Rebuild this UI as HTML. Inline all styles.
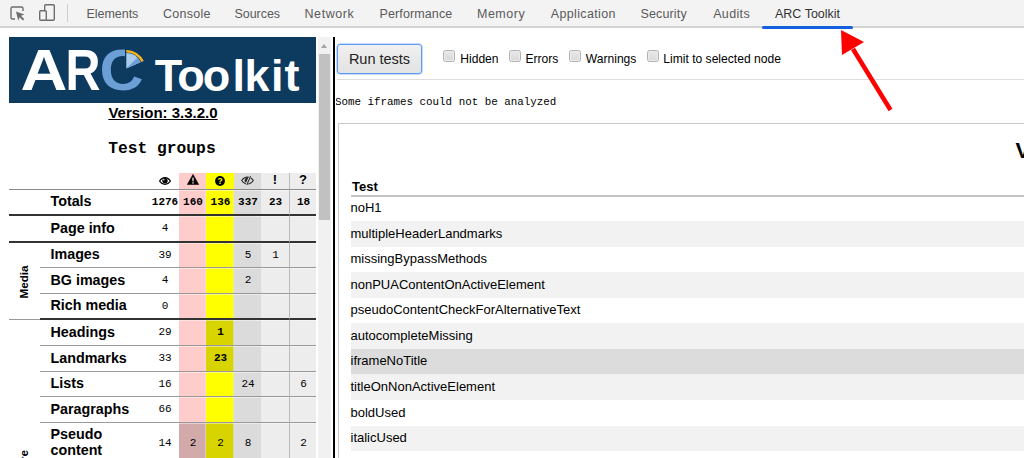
<!DOCTYPE html>
<html lang="en">
<head>
<meta charset="utf-8">
<title>ARC Toolkit</title>
<style>
*{box-sizing:border-box}
html,body{margin:0;padding:0}
body{width:1024px;height:458px;overflow:hidden;background:#fff;position:relative;font-family:"Liberation Sans",Arial,sans-serif;color:#000}
/* devtools tab bar */
#tabbar{position:absolute;left:0;top:0;width:1024px;height:28px;background:#f3f3f3;border-bottom:2px solid #d3d3d3}
#tabbar .ico{position:absolute;top:0;left:0}
#tabbar ul{list-style:none;margin:0;padding:0}
#tabbar li{position:absolute;top:7px;font-size:12.5px;line-height:15px;color:#5a5a5a;white-space:nowrap}
#tabbar li.sel{color:#333}
#tabbar .ul{position:absolute;left:762px;top:25.6px;width:91px;height:3px;border-radius:1.5px;background:#1560dd}
/* left panel */
#left{position:absolute;left:0;top:37px;width:318px;height:421px;overflow:hidden}
#logo{position:absolute;left:9px;top:0;width:307px;height:66px;background:#0d3a5f;margin:0}
#ver{position:absolute;left:9px;top:67px;width:308px;margin:0;text-align:center;font-weight:bold;font-size:15px;line-height:17px;text-decoration:underline}
#tg{position:absolute;left:8px;top:102px;width:308px;margin:0;text-align:center;font-family:"Liberation Mono",monospace;font-weight:bold;font-size:16.25px;line-height:20px}
#sb{position:absolute;left:318px;top:37px;width:13px;height:421px;background:#f1f1f1}
#sb .thumb{position:absolute;left:1px;top:17px;width:11px;height:166px;background:#c1c1c1}
#sb .up{position:absolute;left:3px;top:7px;width:0;height:0;border-left:3.5px solid transparent;border-right:3.5px solid transparent;border-bottom:4px solid #a3a3a3}
#divider{position:absolute;left:333px;top:37px;width:2px;height:421px;background:#000}
/* groups table */
#groups{position:absolute;left:9px;top:136px;width:307px;border-collapse:separate;border-spacing:0;table-layout:fixed}
#groups td,#groups th{padding:0;margin:0;font-weight:normal;text-align:center;vertical-align:middle;height:26px;border:0 solid #999;border-bottom-width:1px}
#groups thead th,#groups thead td{height:17px;line-height:0;border-bottom-color:#8a8a8a;padding-bottom:2px}
#groups .ic{display:inline-block;vertical-align:middle}
#groups th.sym{font-weight:bold;font-size:13px;line-height:14px}
#groups .n{font-family:"Liberation Mono",monospace;font-size:11px;padding:0 0 1px 1px}
#groups .n.hit{font-weight:bold}
#groups tr.r-ps .n.hit{font-weight:normal}
#groups tr.tot .n{font-weight:bold}
#groups th.lab{text-align:left;font-weight:bold;font-size:14.3px;padding:0 0 2px 10.5px;line-height:16px}
#groups th.lab.top{padding-left:41.5px}
#groups tr.r-tot>*,#groups tr.r-pi>*{border-bottom:2px solid #333}
#groups tr.g.last th.lab,#groups tr.g.last td{border-bottom:2px solid #333}
#groups th.grp{position:relative;overflow:visible}
#groups th.grp span{position:absolute;left:50%;top:50%;transform:translate(-50%,-50%) rotate(-90deg);font-weight:bold;font-size:11.7px;line-height:14px;white-space:nowrap;margin:1px 0 0 -0.5px}
#groups th.grp.st span{top:154.5px}
#groups tr.r-pi>*{height:27px}
#groups tr.r-im>th.lab,#groups tr.r-im>td{height:25px}
#groups tr.r-li>*{height:25px}
#groups tr.r-ps>*{height:41px}
#groups .c1{background:#ffcccc;box-shadow:inset 0 1px 0 rgba(255,255,255,.45),inset -1px 0 0 rgba(240,225,255,.5)}
#groups .c2{background:#ffff00;box-shadow:inset 0 1px 0 rgba(255,255,255,.45),inset -1px 0 0 rgba(225,225,255,.6)}
#groups .c3{background:#dbdbdb;box-shadow:inset 0 1px 0 rgba(255,255,255,.45)}
#groups .c4{background:#ededed;box-shadow:inset 0 1px 0 rgba(255,255,255,.45)}
#groups .c5{background:#ededed;border-left:1px solid #bbb;box-shadow:inset 0 1px 0 rgba(255,255,255,.45)}
#groups thead .c1,#groups thead .c2,#groups thead .c3,#groups thead .c4,#groups thead .c5{box-shadow:none}
#groups .c1.hit{background:#d2aaaa}
#groups .c2.hit{background:#d8d400}
/* right panel */
#right{position:absolute;left:336px;top:37px;width:688px;height:421px;overflow:hidden}
#run{position:absolute;left:1px;top:7px;width:85px;height:30px;border:1.5px solid #5e9af7;border-radius:3px;background:linear-gradient(#f0f0f0,#e3e3e3);font-family:"Liberation Sans",Arial,sans-serif;font-size:14.5px;line-height:17px;color:#222;padding:0;margin:0;box-shadow:0 0 0 0.5px #8fb8fa}
.cb{position:absolute;top:13px;font-size:12.1px;line-height:14px;white-space:nowrap}
.cb input{-webkit-appearance:none;appearance:none;display:block;margin:0;padding:0;position:absolute;left:0;top:0;width:12px;height:12px;border:1px solid #b2b2b2;border-radius:2.5px;background:linear-gradient(#e8e8e8,#d9d9d9);box-shadow:inset 0 0 0 1px #ececec}
.cb span{position:absolute;left:18px;top:2px}
#hr{position:absolute;left:1px;top:42px;width:687px;height:1px;background:#ddd}
#msg{position:absolute;left:-1px;top:58px;margin:0;font-family:"Liberation Mono",monospace;font-size:10.85px;line-height:14px;white-space:pre}
#box{position:absolute;left:2px;top:86px;width:700px;height:400px;border:1px solid #c8c8c8}
#cap{position:absolute;left:676.5px;top:15px;margin:0;font-size:22px;font-weight:bold;line-height:24px;white-space:nowrap}
#res{position:absolute;left:12px;top:0;width:700px;border-collapse:separate;border-spacing:0}
#res th{height:73px;text-align:left;vertical-align:bottom;font-size:13px;font-weight:bold;padding:0 0 1px 1px;border-bottom:2px solid #c4c4c4}
#res td{height:25px;padding:0 0 2px 0;font-size:13px;line-height:15px;vertical-align:middle;text-indent:-0.5px}
#res tr:nth-child(even) td{height:26px}
#res tr.tall td{height:26px}
#res tr.short td{height:25px}
#res tr.first td{height:24px;padding-bottom:3px}
#res tr.a td{background:#fff}
#res tr.b td{background:#f2f2f2}
#res tr.s td{background:#dcdcdc}
#arrow{position:absolute;left:0;top:0;width:1024px;height:458px;pointer-events:none}
</style>
</head>
<body>
<div id="tabbar">
  <svg class="ico" width="70" height="27" viewBox="0 0 70 27">
    <path d="M23 11V8.5a1.5 1.5 0 0 0-1.500-1.500h-9a1.500 1.500 0 0 0-1.500 1.500v9a1.500 1.500 0 0 0 1.500 1.500H15" fill="none" stroke="#6e6e6e" stroke-width="1.4"/>
    <path d="M16 11.500l8.500 3-3.500 1.300 3.300 3.400-1.300 1.300-3.400-3.300-1.300 3.500z" fill="#6e6e6e"/>
    <rect x="44.700" y="4.700" width="9.600" height="15.600" rx="1" fill="none" stroke="#6e6e6e" stroke-width="1.400"/>
    <rect x="39.700" y="10.700" width="6.600" height="9.600" rx="1" fill="#f3f3f3" stroke="#6e6e6e" stroke-width="1.400"/>
    <rect x="67" y="4" width="1" height="18" fill="#cdcdcd"/>
  </svg>
  <ul>
    <li style="left:86.5px;letter-spacing:-0.04px">Elements</li>
    <li style="left:163px;letter-spacing:0.25px">Console</li>
    <li style="left:234.5px;letter-spacing:-0.04px">Sources</li>
    <li style="left:304.5px;letter-spacing:0.58px">Network</li>
    <li style="left:379.5px;letter-spacing:0.12px">Performance</li>
    <li style="left:477px;letter-spacing:0.5px">Memory</li>
    <li style="left:550.8px;letter-spacing:0.35px">Application</li>
    <li style="left:640.5px;letter-spacing:0.14px">Security</li>
    <li style="left:713.2px;letter-spacing:0.35px">Audits</li>
    <li class="sel" style="left:775px;letter-spacing:0px">ARC Toolkit</li>
  </ul>
  <div class="ul"></div>
</div>

<div id="left">
  <h1 id="logo">
    <svg width="307" height="66" viewBox="0 0 307 66" role="img" aria-label="ARC Toolkit">
      <text y="53.400" font-family="Liberation Sans,Arial,sans-serif" font-weight="bold" font-size="57.500" fill="#fff"><tspan x="11.400" textLength="46.900" lengthAdjust="spacingAndGlyphs">A</tspan><tspan x="56.550" textLength="35" lengthAdjust="spacingAndGlyphs">R</tspan><tspan x="90.500" fill="#6b9fd6" textLength="44" lengthAdjust="spacingAndGlyphs">C</tspan><tspan> </tspan><tspan x="145.750 168.350 193.750 223.500 235.600 262 275.400" y="53.600" font-size="45">Toolkit</tspan></text>
      <path d="M116 11v21.500l19-8.500v-13z" fill="#0d3a5f"/>
      <path d="M117.300 31.500V16a15.500 15.500 0 0 1 14.200 9.200z" fill="#a9cbee"/>
      <path d="M117.300 31.500l14.200-6.300a15.500 15.500 0 0 0-3.200-4.500z" fill="#6b9fd6"/>
      <path d="M117.300 14.200a18 18 0 0 1 16.300 10.300" fill="none" stroke="#fbb41a" stroke-width="2.600"/>
    </svg>
  </h1>
  <p id="ver">Version: 3.3.2.0</p>
  <h2 id="tg">Test groups</h2>
  <table id="groups">
    <colgroup><col style="width:31px"><col style="width:110px"><col style="width:29px"><col style="width:27px"><col style="width:28px"><col style="width:27px"><col style="width:28px"><col style="width:27px"></colgroup>
    <thead>
      <tr class="hd">
        <td colspan="2"></td>
        <th scope="col"><svg class="ic" style="position:relative;top:0.700px" width="12" height="8" viewBox="0 0 12 8"><path d="M0.600 4C2 1.700 3.800 0.700 6 0.700S10 1.700 11.400 4C10 6.300 8.200 7.300 6 7.300S2 6.300 0.600 4z" fill="#fff" stroke="#000" stroke-width="1.200"/><circle cx="6" cy="3.800" r="2.700" fill="#000"/><circle cx="4.900" cy="2.700" r="0.750" fill="#fff"/></svg></th>
        <th scope="col" class="c1"><svg class="ic" style="position:relative;top:-0.800px" width="12" height="11" viewBox="0 0 12 11"><path d="M6 0.400L11.700 10.600H0.300z" fill="#000" stroke="#000" stroke-width="0.600" stroke-linejoin="round"/><rect x="5.300" y="3.600" width="1.400" height="3.700" fill="#ffd5d5"/><rect x="5.300" y="8.200" width="1.400" height="1.400" fill="#ffd5d5"/></svg></th>
        <th scope="col" class="c2"><svg class="ic" style="position:relative;top:1px" width="10" height="10" viewBox="0 0 10 10"><circle cx="5" cy="5" r="4.900" fill="#000"/><text x="5" y="8" text-anchor="middle" font-family="Liberation Sans,Arial,sans-serif" font-weight="bold" font-size="8.500" fill="#ffff00">?</text></svg></th>
        <th scope="col" class="c3"><svg class="ic" style="position:relative;top:0.500px" width="13" height="9" viewBox="0 0 13 9"><path d="M0.700 4.500C2.200 2.100 4.200 1.100 6.500 1.100S10.800 2.100 12.300 4.500C10.800 6.900 8.800 7.900 6.500 7.900S2.200 6.900 0.700 4.500z" fill="none" stroke="#2e2e2e" stroke-width="1.150"/><path d="M3.600 5.200a3 3 0 0 1 4-3.600L5.300 7.200z" fill="#2e2e2e"/><path d="M9.300 0.500L5.700 8.500" stroke="#dbdbdb" stroke-width="2.200"/><path d="M9.600 0.300L5.900 8.700" stroke="#2e2e2e" stroke-width="1.100"/></svg></th>
        <th scope="col" class="c4 sym">!</th>
        <th scope="col" class="c5 sym">?</th>
      </tr>
    </thead>
    <tbody>
      <tr class="tot r-tot"><th scope="row" colspan="2" class="lab top">Totals</th><td class="n">1276</td><td class="n c1">160</td><td class="n c2">136</td><td class="n c3">337</td><td class="n c4">23</td><td class="n c5">18</td></tr>
      <tr class="r-pi"><th scope="row" colspan="2" class="lab top">Page info</th><td class="n">4</td><td class="n c1"></td><td class="n c2"></td><td class="n c3"></td><td class="n c4"></td><td class="n c5"></td></tr>
      <tr class="g r-im"><th scope="rowgroup" rowspan="3" class="grp"><span>Media</span></th><th scope="row" class="lab">Images</th><td class="n">39</td><td class="n c1"></td><td class="n c2"></td><td class="n c3">5</td><td class="n c4">1</td><td class="n c5"></td></tr>
      <tr class="g r-bg"><th scope="row" class="lab">BG images</th><td class="n">4</td><td class="n c1"></td><td class="n c2"></td><td class="n c3">2</td><td class="n c4"></td><td class="n c5"></td></tr>
      <tr class="g r-rm last"><th scope="row" class="lab">Rich media</th><td class="n">0</td><td class="n c1"></td><td class="n c2"></td><td class="n c3"></td><td class="n c4"></td><td class="n c5"></td></tr>
      <tr class="g r-hd"><th scope="rowgroup" rowspan="5" class="grp st"><span>Structure</span></th><th scope="row" class="lab">Headings</th><td class="n">29</td><td class="n c1"></td><td class="n c2 hit">1</td><td class="n c3"></td><td class="n c4"></td><td class="n c5"></td></tr>
      <tr class="g r-lm"><th scope="row" class="lab">Landmarks</th><td class="n">33</td><td class="n c1"></td><td class="n c2 hit">23</td><td class="n c3"></td><td class="n c4"></td><td class="n c5"></td></tr>
      <tr class="g r-li"><th scope="row" class="lab">Lists</th><td class="n">16</td><td class="n c1"></td><td class="n c2"></td><td class="n c3">24</td><td class="n c4"></td><td class="n c5">6</td></tr>
      <tr class="g r-pa"><th scope="row" class="lab">Paragraphs</th><td class="n">66</td><td class="n c1"></td><td class="n c2"></td><td class="n c3"></td><td class="n c4"></td><td class="n c5"></td></tr>
      <tr class="g r-ps"><th scope="row" class="lab">Pseudo<br>content</th><td class="n">14</td><td class="n c1 hit">2</td><td class="n c2 hit">2</td><td class="n c3">8</td><td class="n c4"></td><td class="n c5">2</td></tr>
    </tbody>
  </table>
</div>
<div id="sb" aria-hidden="true"><div class="up"></div><div class="thumb"></div></div>
<div id="divider"></div>

<div id="right">
  <button id="run" type="button">Run tests</button>
  <label class="cb" style="left:107px"><input type="checkbox"><span style="left:17.25px">Hidden</span></label>
  <label class="cb" style="left:173px"><input type="checkbox"><span style="left:16.5px">Errors</span></label>
  <label class="cb" style="left:233px"><input type="checkbox"><span style="left:16.75px">Warnings</span></label>
  <label class="cb" style="left:311px"><input type="checkbox"><span style="left:16.25px">Limit to selected node</span></label>
  <div id="hr"></div>
  <pre id="msg">Some iframes could not be analyzed</pre>
  <div id="box">
    <div id="cap">V</div>
    <table id="res">
      <thead><tr><th>Test</th></tr></thead>
      <tbody>
        <tr class="a first"><td>noH1</td></tr>
        <tr class="b"><td>multipleHeaderLandmarks</td></tr>
        <tr class="a"><td>missingBypassMethods</td></tr>
        <tr class="b"><td>nonPUAContentOnActiveElement</td></tr>
        <tr class="a"><td>pseudoContentCheckForAlternativeText</td></tr>
        <tr class="b"><td>autocompleteMissing</td></tr>
        <tr class="s"><td>iframeNoTitle</td></tr>
        <tr class="b"><td>titleOnNonActiveElement</td></tr>
        <tr class="a tall"><td>boldUsed</td></tr>
        <tr class="b short"><td>italicUsed</td></tr>
        <tr class="a"><td>&nbsp;</td></tr>
      </tbody>
    </table>
  </div>
</div>

<svg id="arrow" viewBox="0 0 1024 458">
  <path d="M890.500 110L853 49" stroke="#ff0000" stroke-width="4.500" fill="none"/>
  <path d="M841 30L864 42L842 55z" fill="#ff0000"/>
</svg>
</body>
</html>
